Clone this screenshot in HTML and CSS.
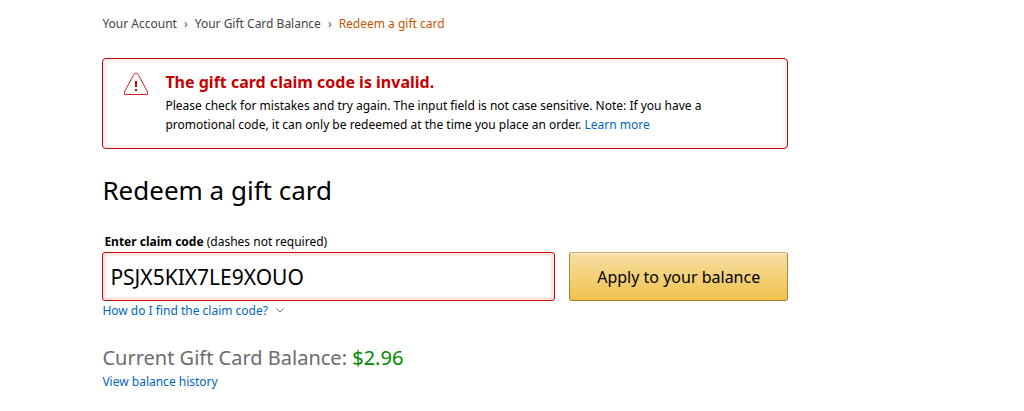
FILE: index.html
```html
<!DOCTYPE html>
<html lang="en">
<head>
    <meta charset="UTF-8">
    <meta name="viewport" content="width=device-width, initial-scale=1.0">
    <title>Redeem a gift card</title>
    <link rel="stylesheet" href="styles.css">
</head>
<body>
    <main class="page">
        <nav class="breadcrumb" aria-label="Breadcrumb">
            <a href="#">Your Account</a>
            <span class="sep">›</span>
            <a href="#">Your Gift Card Balance</a>
            <span class="sep">›</span>
            <span class="current">Redeem a gift card</span>
        </nav>

        <div class="alert" role="alert">
            <svg class="alert-icon" width="26" height="24" viewBox="0 0 26 24" fill="none" stroke="#d4242a">
                <path d="M1.5 22.5V20L10 3.8Q13 -1.6 16 3.8L24.5 20V22.5Z"/>
                <path d="M13 9v6M13 17v2" stroke="#c40000" stroke-width="2"/>
            </svg>
            <div class="alert-body">
                <h2>The gift card claim code is invalid.</h2>
                <p>Please check for mistakes and try again. The input field is not case sensitive. Note: If you have a promotional code, it can only be redeemed at the time you place an order. <a href="#">Learn more</a></p>
            </div>
        </div>

        <h1>Redeem a gift card</h1>

        <form class="redeem">
            <label for="claim-code"><b>Enter claim code</b> (dashes not required)</label>
            <div class="redeem-row">
                <input type="text" id="claim-code" value="PSJX5KIX7LE9XOUO" spellcheck="false">
                <button type="button">Apply to your balance</button>
            </div>
            <a class="help" href="#">How do I find the claim code?
                <svg width="8" height="5" viewBox="0 0 8 5" fill="none" stroke="#777"><path d="M.5 .5L4 4L7.5 .5"/></svg>
            </a>
        </form>

        <div class="balance">Current Gift Card Balance: <span class="amount">$2.96</span></div>
        <a class="history" href="#">View balance history</a>
    </main>
</body>
</html>
```
FILE: styles.css
```css
* { box-sizing: border-box; }
body { margin: 0; background: #fff; color: #000; font-family: "Noto Sans", "Open Sans", sans-serif; font-size: 12px; line-height: 19px; }
a { color: #0066c0; text-decoration: none; }
h1, h2, p { margin: 0; }

.page { padding: 14px 23% 12px 10%; }

.breadcrumb { display: flex; gap: 7px; margin-bottom: 25px; }
.breadcrumb a { color: #444; }
.breadcrumb .sep { color: #555; }
.breadcrumb .current { color: #c45500; }

.alert { display: flex; gap: 16px; min-height: 91px; padding: 13px 56px 13px 20px; border: 1px solid #c40000; border-radius: 4px; box-shadow: inset 0 0 0 4px #fcf4f2; }
.alert-icon { flex: none; }
.alert h2 { color: #c40000; font-size: 16px; line-height: 20px; margin-bottom: 4px; }

h1 { font-size: 26px; font-weight: 400; line-height: 36px; margin: 23px 0 24px; }

.redeem label { display: block; padding-left: 2px; margin-bottom: 1px; }
.redeem-row { display: flex; gap: 14px; }
.redeem-row input { flex: 1; min-width: 0; height: 49px; padding: 0 7px; border: 1px solid #dd0000; border-radius: 3px; box-shadow: inset 0 0 0 3px #fde8e6; color: #000; font-family: inherit; font-size: 21px; outline: none; }
.redeem-row button { width: 32%; height: 49px; border: 1px solid; border-color: #c8ad72 #a88734 #9c7e31; border-radius: 3px; background: linear-gradient(#f7dfa5, #f0c14b); box-shadow: inset 0 1px 0 #fcf0d0; color: #000; font-family: inherit; font-size: 16px; cursor: pointer; }
.help { display: flex; align-items: center; gap: 8px; }

.balance { margin-top: 24px; color: #6c6c6c; font-size: 20px; line-height: 28px; }
.balance .amount { color: #008a00; }
.history { display: inline-block; }
```
